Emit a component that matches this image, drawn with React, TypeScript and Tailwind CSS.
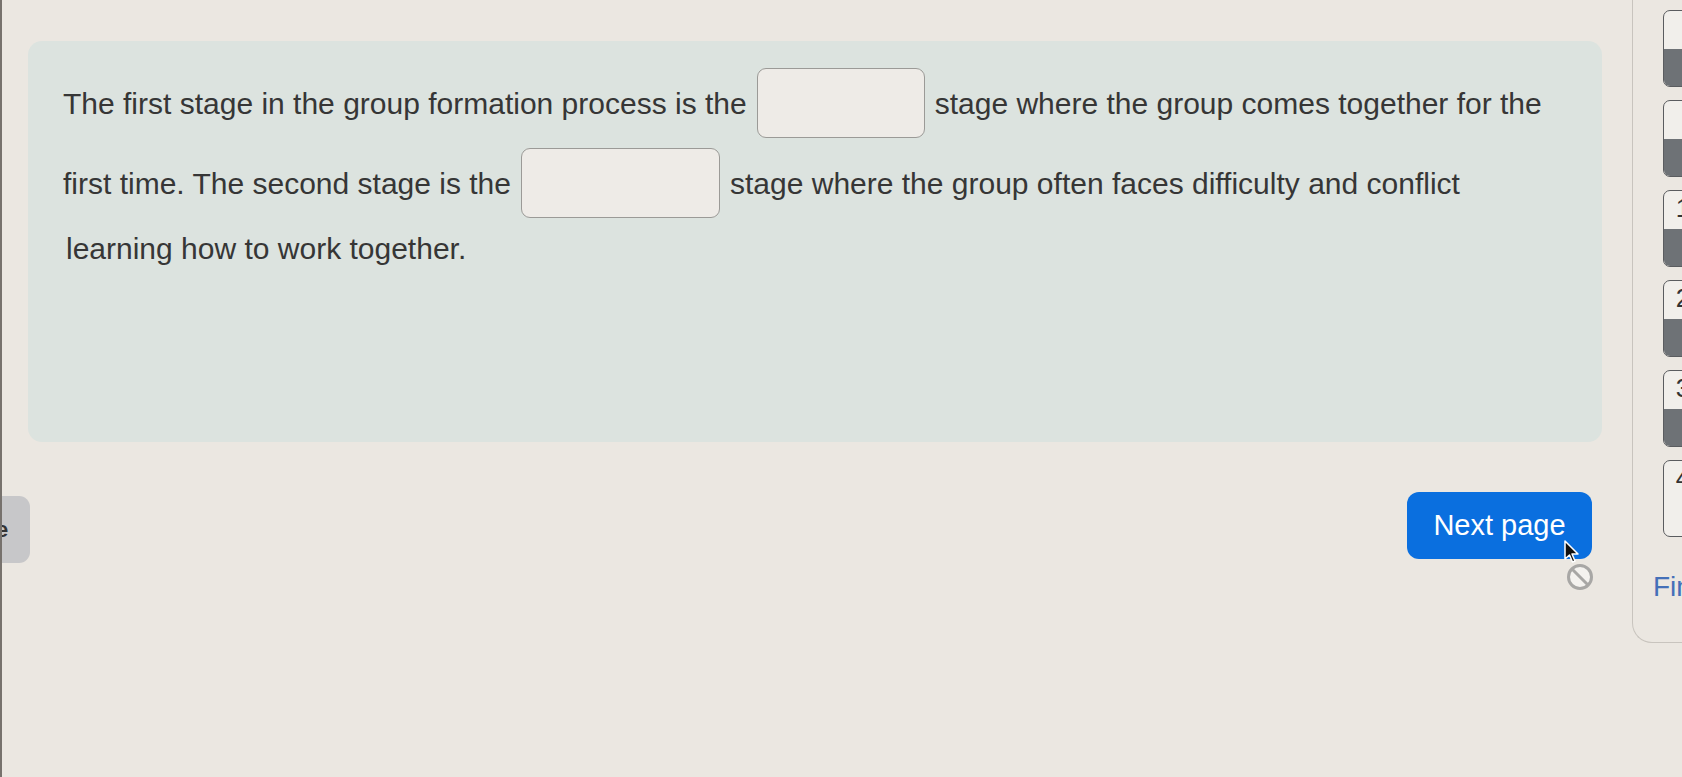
import React from "react";

const font = { fontFamily: '"Liberation Sans", Arial, sans-serif' };

function Blank({ width }: { width: string }) {
  return (
    <input
      type="text"
      aria-label="answer"
      className={`mx-[10px] h-[70px] ${width} shrink-0 rounded-[9px] border-[1.5px] border-[#9b9a97] bg-[#eeebe7] outline-none`}
    />
  );
}

function NavButton({ label, flagged }: { label: string; flagged: boolean }) {
  return (
    <div className="flex h-[77px] w-[40px] flex-col overflow-hidden rounded-[7px] border-[1.5px] border-[#5a5c5f] bg-[#f1efeb]">
      <div className="flex h-[38px] items-start justify-center pt-[4px] text-[26px] leading-none text-[#333]">
        {label}
      </div>
      {flagged && <div className="flex-1 bg-[#6e7276]" />}
    </div>
  );
}

export default function App() {
  const navItems = [
    { label: "", flagged: true },
    { label: "", flagged: true },
    { label: "1", flagged: true },
    { label: "2", flagged: true },
    { label: "3", flagged: true },
    { label: "4", flagged: false },
  ];

  return (
    <div
      className="relative h-[777px] w-[1682px] overflow-hidden border-l-2 border-[#77726d] bg-[#ebe7e1]"
      style={font}
    >
      <div className="flex">
        <main className="ml-[26px] w-[1574px] shrink-0 pt-[41px]">
          <div className="h-[401px] rounded-[14px] bg-[#dce3df] pl-[35px] pt-[27px] text-[30px] text-[#363636]">
            <div className="flex h-[70px] items-center whitespace-nowrap">
              <span>The first stage in the group formation process is the</span>
              <Blank width="w-[168px]" />
              <span>stage where the group comes together for the</span>
            </div>
            <div className="mt-[10px] flex h-[70px] items-center whitespace-nowrap">
              <span>first time. The second stage is the</span>
              <Blank width="w-[199px]" />
              <span>stage where the group often faces difficulty and conflict</span>
            </div>
            <div className="mt-[6px] flex h-[48px] items-center pl-[3px] whitespace-nowrap">
              <span>learning how to work together.</span>
            </div>
          </div>

          <div className="mt-[50px] flex justify-end pr-[10px]">
            <button
              type="button"
              className="h-[67px] w-[185px] rounded-[12px] bg-[#0a6fdf] text-[29px] text-white"
            >
              Next page
            </button>
          </div>
        </main>

        <aside className="ml-[30px] h-[643px] w-[200px] shrink-0 rounded-bl-[20px] border-b-[1.5px] border-l-[1.5px] border-[#c8c4be]">
          <div className="flex flex-col gap-[13px] pl-[30px] pt-[10px]">
            {navItems.map((item, i) => (
              <NavButton key={i} label={item.label} flagged={item.flagged} />
            ))}
          </div>
          <div className="ml-[20px] mt-[29px] whitespace-nowrap text-[28px] text-[#4470b8]">
            Finish attempt ...
          </div>
        </aside>
      </div>

      {/* drawer toggle peeking from the left edge */}
      <div className="absolute left-0 top-[496px] flex h-[67px] w-[28px] items-center rounded-r-[11px] bg-[#c7c7c9]">
        <span className="-ml-[6px] text-[22px] font-bold text-[#333]">e</span>
      </div>

      {/* mouse pointer with "not allowed" badge */}
      <svg
        className="absolute left-[1558px] top-[538px]"
        width="40"
        height="56"
        viewBox="0 0 40 56"
      >
        <path
          d="M5 3 L5 21 L9.5 17 L12.5 24 L15 23 L12 16 L18 16 Z"
          fill="#111"
          stroke="#fff"
          strokeWidth="1.5"
          strokeLinejoin="round"
        />
        <circle cx="20" cy="39" r="11.5" fill="#f4f2ef" stroke="#a8a7a5" strokeWidth="3" />
        <line x1="12" y1="31" x2="28" y2="47" stroke="#a8a7a5" strokeWidth="3" />
      </svg>
    </div>
  );
}
